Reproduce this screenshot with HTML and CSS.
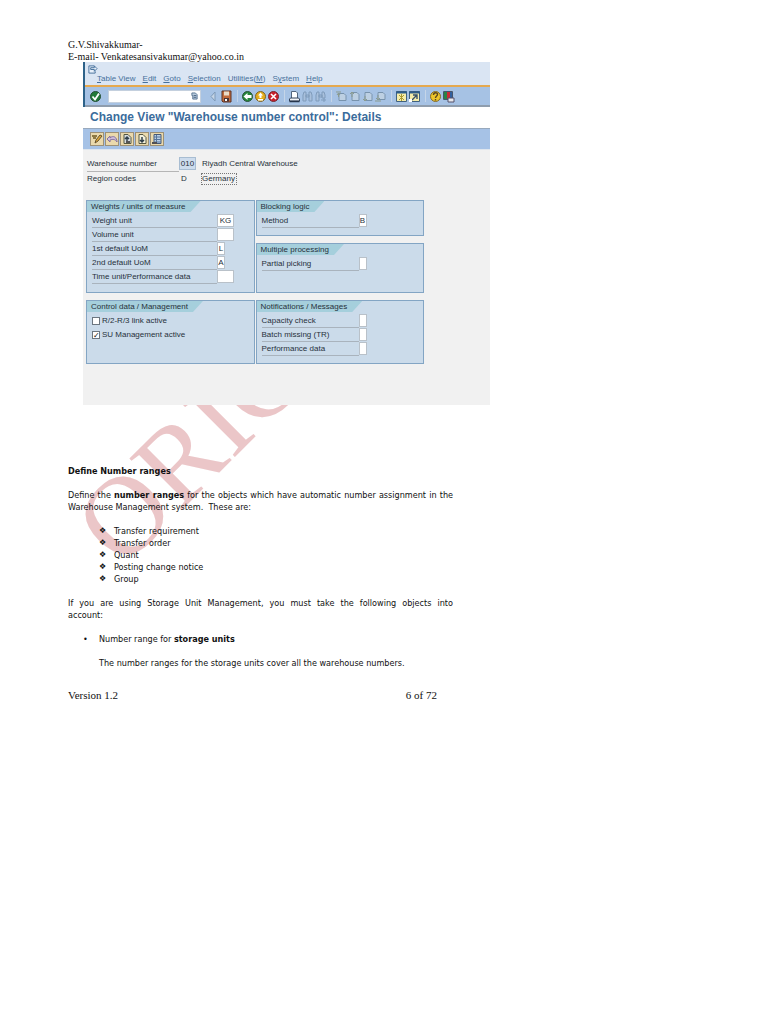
FILE: index.html
```html
<!DOCTYPE html>
<html lang="en">
<head>
<meta charset="utf-8">
<meta name="viewport" content="width=device-width, initial-scale=1">
<title>Warehouse number control</title>
<link rel="stylesheet" href="styles.css">
</head>
<body>
<div class="page">
  <header class="author">G.V.Shivakkumar-<br>E-mail- Venkatesansivakumar@yahoo.co.in</header>

  <div class="watermark" aria-hidden="true">ORIG</div>

  <section class="sap">
    <div class="chrome">
      <div class="menubar">
        <svg class="exit" viewBox="0 0 12 10"><path d="M8 1H2v8h7V7M4 3h4V1l3 3-3 3V5H4z" fill="#e8f0fa" stroke="#3d6a96"/></svg>
        <nav class="menus">
          <a href="#"><u>T</u>able View</a><a href="#"><u>E</u>dit</a><a href="#"><u>G</u>oto</a><a href="#"><u>S</u>election</a><a href="#">Utilities(<u>M</u>)</a><a href="#">S<u>y</u>stem</a><a href="#"><u>H</u>elp</a>
        </nav>
      </div>
      <div class="toolbar">
        <button class="tool" aria-label="Enter"><svg viewBox="0 0 13 13"><circle cx="6.500" cy="6.500" r="5" fill="#207a38" stroke="#244d35"/><path d="M3.500 6.500l2.500 3 4-6" fill="none" stroke="#fff" stroke-width="1.800"/></svg></button>
        <div class="command"><input class="command-input" aria-label="Command"><svg class="history" viewBox="0 0 8 9"><path d="M1 1h4l2 2v5H2V4H1z" fill="#b7c9dc" stroke="#52708e"/><path d="M3 4h3M3 6h3" stroke="#405d7a"/></svg></div>
        <button class="tool" aria-label="Collapse"><svg viewBox="0 0 13 13"><path d="M8 2v9L4 6.500z" fill="#c6d5e6" stroke="#7e9ab8"/></svg></button>
        <button class="tool" aria-label="Save"><svg viewBox="0 0 13 13"><path d="M2 1h9v11H3l-1-1z" fill="#c26b3c" stroke="#5d3526"/><path d="M4 1.500h5v4H4z" fill="#eadcc8"/><path d="M4 8h5v3.500H4z" fill="#4b3434"/><path d="M5 9h2v2H5z" fill="#fff"/></svg></button>
        <span class="sep"></span>
        <button class="tool" aria-label="Back"><svg viewBox="0 0 13 13"><circle cx="6.500" cy="6.500" r="5" fill="#25863b" stroke="#2c513b"/><path d="M2.500 6.500l4-3.500v2h4v3h-4v2z" fill="#fff"/></svg></button>
        <button class="tool" aria-label="Exit"><svg viewBox="0 0 13 13"><circle cx="6.500" cy="6.500" r="5" fill="#e5ad1c" stroke="#7d6329"/><path d="M4 5.500l2.500-3L9 5.500H7.500V8h-2V5.500zM4 9h5v1.500H4z" fill="#fff"/></svg></button>
        <button class="tool" aria-label="Cancel"><svg viewBox="0 0 13 13"><circle cx="6.500" cy="6.500" r="5" fill="#c91f2b" stroke="#752930"/><path d="M4 4l5 5M9 4L4 9" stroke="#fff" stroke-width="1.600"/></svg></button>
        <span class="sep"></span>
        <button class="tool" aria-label="Print"><svg viewBox="0 0 13 13"><path d="M3.500 8V1.500H8L9.500 3v5" fill="#fff" stroke="#53667d"/><path d="M2.500 8h8l1 1v2h-10V9z" fill="#f2f4f7" stroke="#33435a"/><path d="M1.500 11.500h10" stroke="#26354b" stroke-width="1.500"/></svg></button>
        <button class="tool" aria-label="Find"><svg viewBox="0 0 13 13"><path d="M2 5l1-3h2v9H2zM8 2h2l1 3v6H8zM5 5h3v2H5z" fill="#a9c0dc" stroke="#7f9bbb"/></svg></button>
        <button class="tool" aria-label="Find next"><svg viewBox="0 0 13 13"><path d="M2 5l1-3h2v9H2zM8 2h2l1 3v3H8zM5 5h3v2H5z" fill="#a9c0dc" stroke="#7f9bbb"/><path d="M7 10h5M10 8v4" stroke="#7f9bbb"/></svg></button>
        <span class="sep"></span>
        <button class="tool" aria-label="First page"><svg viewBox="0 0 13 13"><path d="M4 3.500h5l2 2v5H4z" fill="#bdd0e3" stroke="#7893ad"/><path d="M1 2h5M3.500 7V3M2 5l1.500-2L5 5" fill="none" stroke="#8b9b8f"/></svg></button>
        <button class="tool" aria-label="Previous page"><svg viewBox="0 0 13 13"><path d="M4 2.500h5l2 2v6H4z" fill="#bdd0e3" stroke="#7893ad"/><path d="M2 4l2-2 2 2M4 2v5" fill="none" stroke="#8b9b8f"/></svg></button>
        <button class="tool" aria-label="Next page"><svg viewBox="0 0 13 13"><path d="M4 2.500h5l2 2v6H4z" fill="#bdd0e3" stroke="#7893ad"/><path d="M2 9l2 2 2-2M4 6v5" fill="none" stroke="#8b9b8f"/></svg></button>
        <button class="tool" aria-label="Last page"><svg viewBox="0 0 13 13"><path d="M4 2.500h5l2 2v5H4z" fill="#bdd0e3" stroke="#7893ad"/><path d="M1 11h6M4 5v5M2 8l2 2 2-2" fill="none" stroke="#8b9b8f"/></svg></button>
        <span class="sep"></span>
        <button class="tool" aria-label="New session"><svg viewBox="0 0 13 13"><path d="M1.500 1.500h10v10h-10z" fill="#f5edaa" stroke="#41617f"/><path d="M1 2.500h11" stroke="#2d5c8b" stroke-width="2"/><path d="M4 5l5 5M9 5l-5 5M6.500 4v7" stroke="#aa9a32"/></svg></button>
        <button class="tool" aria-label="Create shortcut"><svg viewBox="0 0 13 13"><path d="M1.500 1.500h10v10h-10z" fill="#f5edaa" stroke="#41617f"/><path d="M1 2.500h11" stroke="#2d5c8b" stroke-width="2"/><path d="M5 5h4v4M9 5L4 10" fill="none" stroke="#35506a" stroke-width="1.400"/><path d="M1 9h3v3H1z" fill="#fff"/></svg></button>
        <span class="sep"></span>
        <button class="tool" aria-label="Help"><svg viewBox="0 0 13 13"><circle cx="6.500" cy="6.500" r="5" fill="#edc52c" stroke="#866c29"/><path d="M4.500 5c0-3 4-3 4-.5 0 1.500-2 1.500-2 3.500M6.500 9v1.500" fill="none" stroke="#5d4720" stroke-width="1.400"/></svg></button>
        <button class="tool" aria-label="Customize layout"><svg viewBox="0 0 13 13"><path d="M1.500 1.500h9v8h-9z" fill="#dce1e5" stroke="#47566c"/><path d="M2 2h3v7H2z" fill="#298347"/><path d="M5 2h3v7H5z" fill="#cb2937"/><path d="M8 2h2v7H8z" fill="#305f9f"/><path d="M6 8h6v4H6z" fill="#e8e8ec" stroke="#54506a"/></svg></button>
      </div>
    </div>
    <h1 class="view-title">Change View "Warehouse number control": Details</h1>
    <div class="appbar">
      <button class="app" aria-label="Display or change"><svg viewBox="0 0 12 12"><path d="M1 3h5M2 5h3" stroke="#705a20" stroke-width="1.500"/><path d="M4 10l1-3 4-5 2 1-4 5z" fill="#e2a938" stroke="#65522f"/></svg></button>
      <button class="app" aria-label="Undo"><svg viewBox="0 0 12 12"><path d="M1 6l3-3v2c3-3 7-1 7 4-2-3-4-3-7-2v2z" fill="#cfbfdd" stroke="#85719e"/></svg></button>
      <button class="app" aria-label="Previous entry"><svg viewBox="0 0 12 12"><path d="M3 1.500h4l3 3v6H3z" fill="#d6dce0" stroke="#555842"/><path d="M6 8V4M4 6l2-2 2 2" fill="none" stroke="#303f49" stroke-width="1.500"/><path d="M5 8h4v2H5z" fill="#555"/></svg></button>
      <button class="app" aria-label="Next entry"><svg viewBox="0 0 12 12"><path d="M3 1.500h4l3 3v6H3z" fill="#f3f0dc" stroke="#555842"/><path d="M6 4v5M4 7l2 2 2-2" fill="none" stroke="#303f49" stroke-width="1.500"/></svg></button>
      <button class="app" aria-label="Table view"><svg viewBox="0 0 12 12"><path d="M3 1.500h7v9H3z" fill="#bad0e6" stroke="#465a78"/><path d="M3 4h7M3 6.500h7M3 9h7M5.500 2v8" stroke="#56749a"/><path d="M1 9h5v2H1z" fill="#514f52"/></svg></button>
    </div>

    <form class="form">
      <div class="keys">
        <label class="key-label" for="wh">Warehouse number</label><input class="key-box" id="wh" value="010" readonly><span class="key-text">Riyadh Central Warehouse</span>
        <label class="key-label" for="country">Region codes</label><span class="key-code">D</span><input class="country" id="country" value="Germany">
      </div>
      <div class="panels">
        <fieldset class="panel units">
          <legend class="tab">Weights / units of measure</legend>
          <div class="row"><label for="f1">Weight unit</label><input id="f1" class="box wide" value="KG"></div>
          <div class="row"><label for="f2">Volume unit</label><input id="f2" class="box wide"></div>
          <div class="row"><label for="f3">1st default UoM</label><input id="f3" class="box" value="L"></div>
          <div class="row"><label for="f4">2nd default UoM</label><input id="f4" class="box" value="A"></div>
          <div class="row"><label for="f5">Time unit/Performance data</label><input id="f5" class="box wide"></div>
        </fieldset>
        <div class="stack">
          <fieldset class="panel">
            <legend class="tab">Blocking logic</legend>
            <div class="row"><label for="f6">Method</label><input id="f6" class="box" value="B"></div>
          </fieldset>
          <fieldset class="panel grow">
            <legend class="tab">Multiple processing</legend>
            <div class="row"><label for="f7">Partial picking</label><input id="f7" class="box"></div>
          </fieldset>
        </div>
        <fieldset class="panel">
          <legend class="tab">Control data / Management</legend>
          <label class="check"><input type="checkbox">R/2-R/3 link active</label>
          <label class="check"><input type="checkbox" checked>SU Management active</label>
        </fieldset>
        <fieldset class="panel">
          <legend class="tab">Notifications / Messages</legend>
          <div class="row"><label for="f8">Capacity check</label><input id="f8" class="box"></div>
          <div class="row"><label for="f9">Batch missing (TR)</label><input id="f9" class="box"></div>
          <div class="row"><label for="f10">Performance data</label><input id="f10" class="box"></div>
        </fieldset>
      </div>
    </form>
  </section>

  <main class="text">
    <h2>Define Number ranges</h2>
    <p>Define the <b>number ranges</b> for the objects which have automatic number assignment in the Warehouse Management system.&nbsp; These are:</p>
    <ul class="diamonds">
      <li>Transfer requirement</li><li>Transfer order</li><li>Quant</li><li>Posting change notice</li><li>Group</li>
    </ul>
    <p><span class="full-line">If you are using Storage Unit Management, you must take the following objects into</span> account:</p>
    <ul class="dots">
      <li><p>Number range for <b>storage units</b></p><p>The number ranges for the storage units cover all the warehouse numbers.</p></li>
    </ul>
  </main>
  <footer class="foot"><span>Version 1.2</span><span>6 of 72</span></footer>
</div>
</body>
</html>
```
FILE: styles.css
```css
* { box-sizing: border-box; }
body { margin: 0; background: #fff; color: #111; }
.page { position: relative; max-width: 500px; padding: 39px 10px 40px 68px; }
.author { font: 10px/12px "Liberation Serif", serif; }

.watermark {
  position: absolute; left: 95px; top: 487px; z-index: -1;
  font: 112px/112px "Liberation Serif", serif; color: #ebc6c8;
  transform: rotate(-45deg); transform-origin: 0 50%;
}

.sap { margin: -1px 0 0 15px; background: #f1f1f1; font: 8px/10px "Liberation Sans", sans-serif; color: #27313b; }
.sap button, .sap input { font: inherit; color: inherit; padding: 0; margin: 0; border: 0; border-radius: 0; }
.sap svg { display: block; }
.chrome { border-left: 2px solid #2d6289; }
.menubar { background: #dae5f3; height: 25px; padding: 3px 2px 0; border-bottom: 2px solid #e5a94f; }
.exit { width: 11px; height: 9px; }
.menus { display: flex; gap: 7px; padding-left: 10px; }
.menus a { color: #46709b; text-decoration: none; }
.toolbar { display: flex; align-items: center; height: 20px; padding-left: 4px; background: #a6c2e4; border-bottom: 2px solid #8f9dad; }
.tool { flex: none; width: 13px; height: 13px; background: none; }
.tool svg { width: 13px; height: 13px; }
.command { display: flex; align-items: center; width: 93px; height: 13px; margin: 0 6px; padding-right: 2px; background: #fff; border: 1px solid #c4d0de; }
.command-input { flex: 1; min-width: 0; background: none; }
.history { width: 7px; height: 8px; }
.sep { flex: none; width: 8px; height: 12px; background: linear-gradient(#c5d5e8, #c5d5e8) center / 1px 100% no-repeat; }
.view-title { margin: 0; padding-left: 7px; background: #fff; color: #3b6c9c; font-size: 12px; line-height: 21px; white-space: nowrap; }
.appbar { display: flex; align-items: center; gap: 1px; height: 22px; padding-left: 7px; background: #a6c2e6; border-top: 1px solid #98a9bd; border-bottom: 1px solid #dfe6ee; }
.app { width: 14px; height: 14px; background: #ead9ac; }
.sap .app { border: 1px solid #9c9077; }
.app svg { width: 12px; height: 12px; }

.form { padding: 7px 66px 41px 3px; }
.keys { display: grid; grid-template-columns: 92px 17px 1fr; line-height: 14px; padding-left: 1px; }
.key-label { border-bottom: 1px solid #b5b5b5; }
.key-label:nth-of-type(2) { border: 0; }
.sap .key-box { border: 1px solid #a8bdd2; background: #cddced; text-align: center; width: 17px; height: 13px; }
.key-text { padding-left: 6px; }
.key-code { padding-left: 2px; }
.sap .country { border: 1px dotted #777; width: 36px; height: 12px; margin: 1px 0 0 5px; background: none; }

.panels { display: grid; grid-template-columns: 1fr 1fr; gap: 7px 1px; margin-top: 14px; }
.panel { min-width: 0; margin: 0; padding: 0 0 7px 5px; background: #cbdbea; border: 1px solid #83a5c4; }
.units { padding-bottom: 8px; }
.stack { display: flex; flex-direction: column; gap: 7px; }
.grow { flex: 1; }
.tab { float: left; margin: 0 0 2px -5px; padding: 0 15px 0 4px; background: #a5cfdc; line-height: 11px; clip-path: polygon(0 0, 100% 0, calc(100% - 10px) 100%, 0 100%); white-space: nowrap; }
.row { clear: both; display: flex; height: 14px; line-height: 14px; }
.row label { width: 97px; border-bottom: 1px solid #a9b3bd; white-space: nowrap; }
.units .row label { width: 125px; }
.sap .box { width: 8px; height: 13px; background: #fff; border: 1px solid #b9c1c9; text-align: center; }
.sap .wide { width: 17px; }
.check { clear: both; display: flex; align-items: center; gap: 2px; height: 14px; }
.check input { appearance: none; display: grid; place-items: center; width: 8px; height: 8px; }
.sap .check input { border: 1px solid #6c7680; background: #fff; }
.check input:checked::after { content: "✓"; font: bold 8px/8px "DejaVu Sans", sans-serif; color: #111; }

.text { width: 385px; margin-top: 60px; font: 9px/12px "DejaVu Sans Condensed", "DejaVu Sans", sans-serif; text-align: justify; }
.text h2 { margin: 0 0 12px; font: inherit; font-weight: bold; }
.text p { margin: 0 0 12px; }
.full-line { display: block; text-align-last: justify; }
.text ul { margin: 0 0 12px; padding: 0; list-style: none; }
.text li { position: relative; }
.diamonds li { padding-left: 46px; }
.dots li { padding-left: 31px; }
.diamonds li::before { content: "❖"; position: absolute; left: 31px; font: 8px/12px "DejaVu Sans", sans-serif; }
.dots li::before { content: "•"; position: absolute; left: 15px; }
.foot { display: flex; justify-content: space-between; width: 369px; margin-top: 20px; font: 11px/12px "Liberation Serif", serif; }
```
